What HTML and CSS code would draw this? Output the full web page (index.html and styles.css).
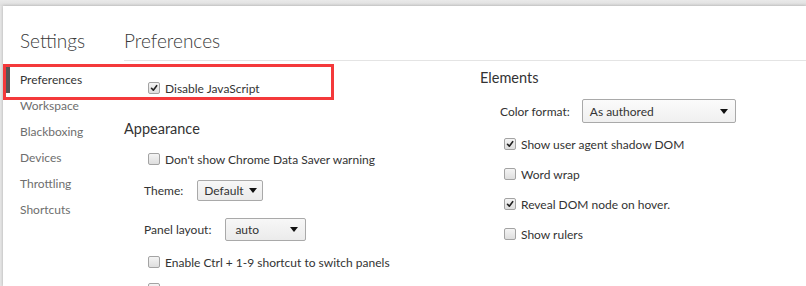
FILE: index.html
```html
<!DOCTYPE html>
<html>
<head>
<meta charset="utf-8">
<link rel="stylesheet" href="styles.css">
</head>
<body>
<div class="dialog">
  <div class="title">Settings</div>
  <div class="page-title">Preferences</div>
  <nav class="nav">
    <div class="nav-item selected">Preferences</div>
    <div class="nav-item">Workspace</div>
    <div class="nav-item">Blackboxing</div>
    <div class="nav-item">Devices</div>
    <div class="nav-item">Throttling</div>
    <div class="nav-item">Shortcuts</div>
  </nav>
  <div class="content">
    <div class="col col-left">
      <div class="row check-row r-js"><span class="cb on"><svg viewBox="0 0 12 12"><path d="M3 6.3 L5.2 8.6 L9.2 3.2"/></svg></span>Disable JavaScript</div>
      <div class="section-title r-appearance">Appearance</div>
      <div class="row check-row r-saver"><span class="cb"></span>Don't show Chrome Data Saver warning</div>
      <div class="row select-row r-theme"><span class="label l-theme">Theme:</span><span class="select s-theme">Default<i class="arrow"></i></span></div>
      <div class="row select-row r-panel"><span class="label l-panel">Panel layout:</span><span class="select s-panel">auto<i class="arrow"></i></span></div>
      <div class="row check-row r-ctrl"><span class="cb"></span>Enable Ctrl + 1-9 shortcut to switch panels</div>
      <div class="row check-row r-next"><span class="cb"></span></div>
    </div>
    <div class="col col-right">
      <div class="section-title r-elements">Elements</div>
      <div class="row select-row r-color"><span class="label l-color">Color format:</span><span class="select s-color">As authored<i class="arrow"></i></span></div>
      <div class="row check-row r-ua"><span class="cb on"><svg viewBox="0 0 12 12"><path d="M3 6.3 L5.2 8.6 L9.2 3.2"/></svg></span>Show user agent shadow DOM</div>
      <div class="row check-row r-gap"><span class="cb"></span>Word wrap</div>
      <div class="row check-row r-gap"><span class="cb on"><svg viewBox="0 0 12 12"><path d="M3 6.3 L5.2 8.6 L9.2 3.2"/></svg></span>Reveal DOM node on hover.</div>
      <div class="row check-row r-gap"><span class="cb"></span>Show rulers</div>
    </div>
  </div>
</div>
<div class="highlight"></div>
</body>
</html>
```
FILE: styles.css
```css
html, body {
  margin: 0;
  padding: 0;
}
body {
  width: 806px;
  height: 286px;
  overflow: hidden;
  background: linear-gradient(#e9e9e9, #dedede 6px, #e6e6e6 6px);
  font-family: "Lato", "Open Sans", sans-serif;
  font-size: 12px;
  color: #333;
  position: relative;
}
.dialog {
  margin: 6px 0 0 3px;
  height: 280px;
  overflow: hidden;
  background: #fff;
  box-shadow: 0 0 3px rgba(0,0,0,0.25);
  display: grid;
  grid-template-columns: 121px 1fr;
  grid-template-rows: 55px 1fr;
}
.title {
  padding: 22px 0 0 17px;
  font-size: 19px;
  font-weight: 300;
  line-height: 26px;
  color: #3a3a3a;
}
.page-title {
  padding: 22px 0 0 0;
  font-size: 19px;
  font-weight: 300;
  line-height: 26px;
  color: #3a3a3a;
  border-bottom: 1px solid #e4e4e4;
  box-sizing: border-box;
}
.nav {
  padding-top: 6px;
}
.nav-item {
  height: 26px;
  line-height: 26px;
  margin-left: 2px;
  border-left: 5px solid transparent;
  padding-left: 10px;
  color: #6e6e6e;
}
.nav-item.selected {
  border-left-color: #555;
  color: #333;
}
.content {
  display: grid;
  grid-template-columns: 356px 1fr;
}
.section-title {
  font-size: 14.5px;
  height: 24px;
  line-height: 24px;
}
.row {
  height: 26px;
  display: flex;
  align-items: center;
}
.check-row {
  padding-left: 24px;
}
.select-row {
  padding-left: 20px;
}
.cb {
  width: 10px;
  height: 10px;
  border: 1px solid #a3a3a3;
  border-radius: 2px;
  background: linear-gradient(#f4f4f4, #dedede);
  margin-right: 5px;
  display: inline-flex;
  flex: none;
}
.cb svg {
  width: 10px;
  height: 10px;
}
.cb path {
  fill: none;
  stroke: #222;
  stroke-width: 1.9;
  stroke-linecap: round;
  stroke-linejoin: round;
}
.select {
  position: relative;
  box-sizing: border-box;
  border: 1px solid #a9a9a9;
  border-radius: 2px;
  background: linear-gradient(#f7f7f7, #ebebeb);
  display: inline-flex;
  align-items: center;
  padding-left: 8px;
}
.arrow {
  position: absolute;
  right: 7px;
  top: 50%;
  margin-top: -2px;
  width: 0;
  height: 0;
  border-left: 4px solid transparent;
  border-right: 4px solid transparent;
  border-top: 5px solid #111;
}
.l-theme { margin-right: 14px; }
.l-panel { margin-right: 14px; }
.l-color { margin-right: 12px; }
.s-theme { width: 66px; height: 21px; padding-left: 6px; }
.s-theme .arrow { right: 5px; }
.s-panel { width: 81px; height: 23px; padding-left: 9px; }
.s-color { width: 154px; height: 24px; padding-left: 7px; background: linear-gradient(#fbfbfb, #f0f0f0); }

.r-js { margin-top: 14px; }
.r-appearance { margin-top: 16px; }
.r-saver { margin-top: 5px; }
.r-theme { margin-top: 5px; }
.r-panel { margin-top: 13px; }
.r-ctrl { margin-top: 7px; }
.r-next { margin-top: 1px; }

.r-elements { margin-top: 5px; }
.r-color { margin-top: 8px; }
.r-ua { margin-top: 7px; }
.r-gap { margin-top: 4px; }

.highlight {
  position: absolute;
  left: 3px;
  top: 64px;
  width: 331px;
  height: 36px;
  box-sizing: border-box;
  border: 3px solid #f4393b;
}
```
